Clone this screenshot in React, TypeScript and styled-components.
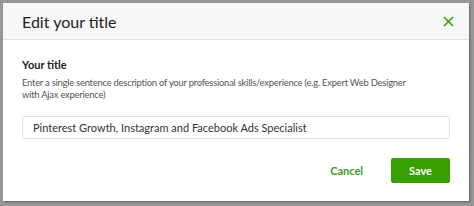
import { createGlobalStyle } from 'styled-components'
import styled from 'styled-components'

const GlobalStyle = createGlobalStyle`
  html, body {
    margin: 0;
    padding: 0;
    background: #979797;
  }
  body {
    width: 474px;
    height: 206px;
    overflow: hidden;
    font-family: Lato, "Open Sans", sans-serif;
  }
`

const Backdrop = styled.div`
  padding: 3px 0 0 3px;
`

const Modal = styled.div`
  width: 466px;
  height: 198px;
  background: #ffffff;
  box-shadow: 1px 1px 2px rgba(0, 0, 0, 0.35);
  display: flex;
  flex-direction: column;
`

const Header = styled.div`
  height: 37px;
  box-sizing: border-box;
  padding: 0 14px 0 19px;
  display: flex;
  align-items: center;
  justify-content: space-between;
  background: #f7f7f7;
  border-bottom: 1px solid #e2e2e2;
`

const Title = styled.h1`
  margin: 0;
  font-size: 16px;
  font-weight: 400;
  color: #222222;
`

const CloseButton = styled.button`
  border: 0;
  background: none;
  padding: 0;
  width: 14px;
  height: 14px;
  display: flex;
  align-items: center;
  justify-content: center;
  cursor: pointer;
`

const Body = styled.div`
  padding: 18px 19px 0 19px;
  display: flex;
  flex-direction: column;
`

const Label = styled.label`
  font-size: 11px;
  font-weight: 700;
  color: #222222;
  line-height: 14px;
`

const Hint = styled.p`
  margin: 5px 0 0 0;
  font-size: 9.4px;
  line-height: 12px;
  letter-spacing: -0.22px;
  color: #555555;
  white-space: nowrap;
`

const Input = styled.input`
  margin-top: 15px;
  height: 23px;
  box-sizing: border-box;
  border: 1px solid #e0e0e0;
  border-radius: 2px;
  padding: 0 10px;
  font-family: inherit;
  font-size: 11px;
  color: #333333;
  outline: none;
`

const Footer = styled.div`
  margin-top: 19px;
  display: flex;
  justify-content: flex-end;
  align-items: center;
  gap: 28px;
`

const TextButton = styled.button`
  border: 0;
  background: none;
  padding: 0;
  font-family: inherit;
  font-size: 11px;
  font-weight: 700;
  color: #3c9a1f;
  cursor: pointer;
`

const PrimaryButton = styled.button`
  width: 59px;
  height: 25px;
  border: 0;
  border-radius: 2px;
  background: #37a000;
  color: #ffffff;
  font-family: inherit;
  font-size: 11px;
  font-weight: 700;
  cursor: pointer;
`

export default function App() {
  return (
    <>
      <GlobalStyle />
      <Backdrop>
        <Modal>
          <Header>
            <Title>Edit your title</Title>
            <CloseButton aria-label="Close">
              <svg width="11" height="11" viewBox="0 0 11 11">
                <path d="M1 1L10 10M10 1L1 10" stroke="#37a000" strokeWidth="1.6" />
              </svg>
            </CloseButton>
          </Header>
          <Body>
            <Label htmlFor="title">Your title</Label>
            <Hint>
              Enter a single sentence description of your professional skills/experience (e.g. Expert Web Designer
              <br />
              with Ajax experience)
            </Hint>
            <Input id="title" defaultValue="Pinterest Growth, Instagram and Facebook Ads Specialist" />
            <Footer>
              <TextButton>Cancel</TextButton>
              <PrimaryButton>Save</PrimaryButton>
            </Footer>
          </Body>
        </Modal>
      </Backdrop>
    </>
  )
}
